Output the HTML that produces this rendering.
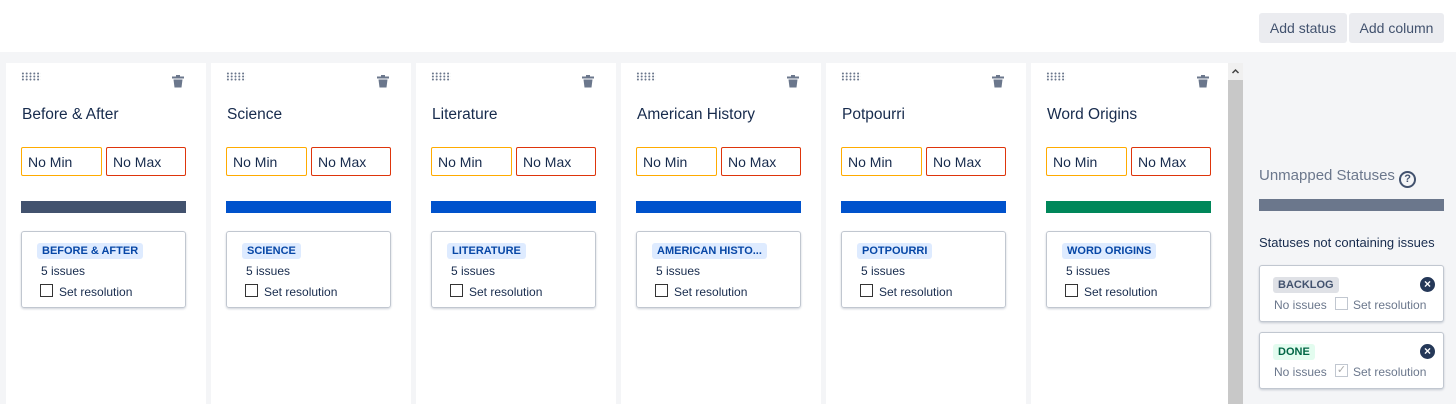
<!DOCTYPE html><html><head><style>
*{box-sizing:border-box;margin:0;padding:0}
body{width:1456px;height:404px;overflow:hidden;background:#fff;font-family:"Liberation Sans",sans-serif;color:#172b4d;position:relative}
.bg{position:absolute;left:0;top:52px;width:1456px;height:352px;background:#f4f5f7}
.btn{position:absolute;top:13px;height:30px;background:#ebecf0;border-radius:3px;font-size:14px;color:#42526e;line-height:30px;text-align:center}
.col{position:absolute;top:63px;width:200px;height:341px;background:#fff}
.drag{position:absolute;left:15px;top:9px;width:20px;height:9px;background-image:radial-gradient(circle,#6b778c 0.9px,transparent 1.1px);background-size:3.8px 3px}
.trash{position:absolute;left:166px;top:12px}
.title{position:absolute;left:16px;top:43px;font-size:15.5px;color:#172b4d}
.in{position:absolute;top:84px;width:81px;height:29px;border-radius:2px;font-size:14px;padding:6px 0 0 6px;color:#172b4d}
.mn{left:15px;border:1px solid #ffab00}
.mx{left:100px;width:80px;border:1px solid #de350b}
.bar{position:absolute;left:15px;top:138px;width:165px;height:12px}
.card{position:absolute;left:15px;top:168px;width:165px;height:77px;border:1px solid #c1c7d0;border-radius:3px;box-shadow:0 1px 2px rgba(9,30,66,.2)}
.badge{position:absolute;left:15px;top:11px;height:16px;padding:0 5px;border-radius:3px;background:#deebff;color:#0747a6;font-size:11px;font-weight:bold;line-height:16px}
.iss{position:absolute;left:19px;top:32px;font-size:12px}
.cb{position:absolute;left:18px;top:52px;width:13px;height:13px;border:1.3px solid #333}
.sr{position:absolute;left:37px;top:53px;font-size:12px}
.rc{position:absolute;left:1259px;width:185px;height:57px;border:1px solid #c1c7d0;border-radius:3px;background:#fff;box-shadow:0 1px 2px rgba(9,30,66,.2)}
.rc .badge{left:13px;top:11px}
.rc .t{position:absolute;left:14px;top:32px;font-size:12px;color:#6b778c}
.rc .c{position:absolute;left:75px;top:31px;width:13px;height:13px;border:1px solid #c1c7d0;font-size:11px;line-height:11px;color:#aaa;text-align:center}
.rc .x{position:absolute;left:160px;top:11px;width:15px;height:15px;border-radius:50%;background:#253858;color:#fff;font-size:12px;font-weight:bold;line-height:15px;text-align:center}
</style></head><body>
<div class="bg"></div>
<div class="btn" style="left:1259px;width:88px">Add status</div>
<div class="btn" style="left:1349px;width:95px">Add column</div>

<div class="col" style="left:6px"><div class="drag"></div><svg class="trash" width="12" height="13" viewBox="0 0 12 13"><rect x="0" y="1.5" width="12" height="2" fill="#6b778c"/><rect x="4" y="0" width="4" height="2" fill="#6b778c"/><path d="M1.5 4.5h9l-1 8h-7z" fill="#6b778c"/></svg><div class="title">Before &amp; After</div><div class="in mn">No Min</div><div class="in mx">No Max</div><div class="bar" style="background:#42526e"></div><div class="card"><div class="badge">BEFORE &amp; AFTER</div><div class="iss">5 issues</div><div class="cb"></div><div class="sr">Set resolution</div></div></div>
<div class="col" style="left:211px"><div class="drag"></div><svg class="trash" width="12" height="13" viewBox="0 0 12 13"><rect x="0" y="1.5" width="12" height="2" fill="#6b778c"/><rect x="4" y="0" width="4" height="2" fill="#6b778c"/><path d="M1.5 4.5h9l-1 8h-7z" fill="#6b778c"/></svg><div class="title">Science</div><div class="in mn">No Min</div><div class="in mx">No Max</div><div class="bar" style="background:#0052cc"></div><div class="card"><div class="badge">SCIENCE</div><div class="iss">5 issues</div><div class="cb"></div><div class="sr">Set resolution</div></div></div>
<div class="col" style="left:416px"><div class="drag"></div><svg class="trash" width="12" height="13" viewBox="0 0 12 13"><rect x="0" y="1.5" width="12" height="2" fill="#6b778c"/><rect x="4" y="0" width="4" height="2" fill="#6b778c"/><path d="M1.5 4.5h9l-1 8h-7z" fill="#6b778c"/></svg><div class="title">Literature</div><div class="in mn">No Min</div><div class="in mx">No Max</div><div class="bar" style="background:#0052cc"></div><div class="card"><div class="badge">LITERATURE</div><div class="iss">5 issues</div><div class="cb"></div><div class="sr">Set resolution</div></div></div>
<div class="col" style="left:621px"><div class="drag"></div><svg class="trash" width="12" height="13" viewBox="0 0 12 13"><rect x="0" y="1.5" width="12" height="2" fill="#6b778c"/><rect x="4" y="0" width="4" height="2" fill="#6b778c"/><path d="M1.5 4.5h9l-1 8h-7z" fill="#6b778c"/></svg><div class="title">American History</div><div class="in mn">No Min</div><div class="in mx">No Max</div><div class="bar" style="background:#0052cc"></div><div class="card"><div class="badge">AMERICAN HISTO...</div><div class="iss">5 issues</div><div class="cb"></div><div class="sr">Set resolution</div></div></div>
<div class="col" style="left:826px"><div class="drag"></div><svg class="trash" width="12" height="13" viewBox="0 0 12 13"><rect x="0" y="1.5" width="12" height="2" fill="#6b778c"/><rect x="4" y="0" width="4" height="2" fill="#6b778c"/><path d="M1.5 4.5h9l-1 8h-7z" fill="#6b778c"/></svg><div class="title">Potpourri</div><div class="in mn">No Min</div><div class="in mx">No Max</div><div class="bar" style="background:#0052cc"></div><div class="card"><div class="badge">POTPOURRI</div><div class="iss">5 issues</div><div class="cb"></div><div class="sr">Set resolution</div></div></div>
<div class="col" style="left:1031px"><div class="drag"></div><svg class="trash" width="12" height="13" viewBox="0 0 12 13"><rect x="0" y="1.5" width="12" height="2" fill="#6b778c"/><rect x="4" y="0" width="4" height="2" fill="#6b778c"/><path d="M1.5 4.5h9l-1 8h-7z" fill="#6b778c"/></svg><div class="title">Word Origins</div><div class="in mn">No Min</div><div class="in mx">No Max</div><div class="bar" style="background:#00875a"></div><div class="card"><div class="badge">WORD ORIGINS</div><div class="iss">5 issues</div><div class="cb"></div><div class="sr">Set resolution</div></div></div>

<div style="position:absolute;left:1228px;top:63px;width:15px;height:341px;background:#c8c8c8"></div>
<div style="position:absolute;left:1228px;top:63px;width:15px;height:17px;background:#f0f0f0"><svg width="15" height="17"><path d="M4.5 10l3-3 3 3" stroke="#444" stroke-width="1.5" fill="none"/></svg></div>

<div style="position:absolute;left:1259px;top:167px;font-size:15px;color:#6b778c">Unmapped Statuses <span style="display:inline-block;width:17px;height:17px;border:2px solid #42526e;border-radius:50%;font-size:11px;line-height:13px;text-align:center;color:#42526e;font-weight:bold;vertical-align:-2px">?</span></div>
<div style="position:absolute;left:1259px;top:199px;width:185px;height:12px;background:#6b778c"></div>
<div style="position:absolute;left:1259px;top:235px;font-size:13px">Statuses not containing issues</div>
<div class="rc" style="top:265px"><div class="badge" style="background:#dfe1e6;color:#42526e">BACKLOG</div><div class="x">×</div><div class="t">No issues</div><div class="c"></div><div class="t" style="left:93px">Set resolution</div></div>
<div class="rc" style="top:332px"><div class="badge" style="background:#e3fcef;color:#006644">DONE</div><div class="x">×</div><div class="t">No issues</div><div class="c">✓</div><div class="t" style="left:93px">Set resolution</div></div>
</body></html>
